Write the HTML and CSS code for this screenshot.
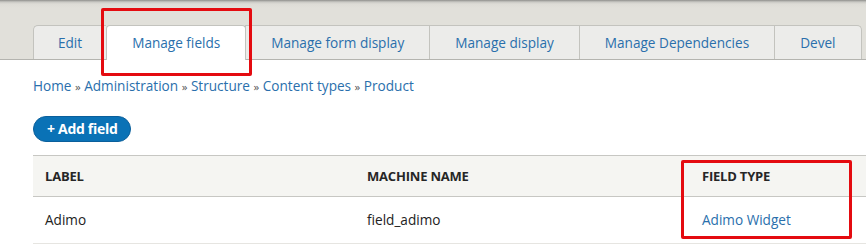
FILE: index.html
```html
<!DOCTYPE html>
<html>
<head>
<meta charset="utf-8">
<link rel="stylesheet" href="styles.css">
</head>
<body>
<header class="tabs-bar">
  <nav class="tabs">
    <a class="tab tab-first" href="#">Edit</a>
    <a class="tab tab-active" href="#">Manage fields</a>
    <a class="tab" href="#">Manage form display</a>
    <a class="tab" href="#">Manage display</a>
    <a class="tab" href="#">Manage Dependencies</a>
    <a class="tab tab-last" href="#">Devel</a>
  </nav>
</header>
<main class="content">
  <div class="breadcrumb">
    <a href="#">Home</a> <span class="sep">»</span> <a href="#">Administration</a> <span class="sep">»</span> <a href="#">Structure</a> <span class="sep">»</span> <a href="#">Content types</a> <span class="sep">»</span> <a href="#">Product</a>
  </div>
  <a class="button-add" href="#">+ Add field</a>
  <table class="fields">
    <thead>
      <tr><th class="col-label">Label</th><th class="col-machine">Machine name</th><th class="col-type">Field type</th></tr>
    </thead>
    <tbody>
      <tr><td>Adimo</td><td>field_adimo</td><td><a href="#">Adimo Widget</a></td></tr>
    </tbody>
  </table>
</main>
<div class="highlight highlight-tab"></div>
<div class="highlight highlight-type"></div>
</body>
</html>
```

FILE: styles.css
```css
html, body {
  margin: 0;
  padding: 0;
  background: #fff;
  overflow: hidden;
}
body {
  font-family: "Open Sans", "DejaVu Sans", sans-serif;
  font-size: 13.6px;
  color: #222;
  position: relative;
  width: 866px;
  height: 244px;
}
a {
  color: #2a6fac;
  text-decoration: none;
}
.tabs-bar {
  height: 34px;
  padding-top: 25px;
  padding-left: 33px;
  background: linear-gradient(#8f8f8c 0, #c9c9c4 2px, #dddcd6 4px, #e1e0da 8px);
  border-bottom: 1px solid #b4b4af;
}
.tabs {
  display: flex;
  height: 34px;
}
.tab {
  display: flex;
  align-items: center;
  justify-content: center;
  box-sizing: border-box;
  height: 34px;
  padding: 0 25px 1px;
  background: #ececea;
  border-top: 1px solid #c3c3be;
  border-left: 1px solid #c3c3be;
  white-space: nowrap;
}
.tab-first {
  border-top-left-radius: 5px;
  padding: 0 24px 1px;
}
.tab-last {
  border-right: 1px solid #c3c3be;
  border-top-right-radius: 5px;
}
.tab-active {
  background: #fff;
  height: 35px;
  padding-bottom: 2px;
  position: relative;
  z-index: 1;
  border-top-left-radius: 4px;
  border-top-right-radius: 4px;
  border-right: 1px solid #c3c3be;
  margin-right: -1px;
}
.content {
  padding-left: 33px;
}
.breadcrumb {
  margin-top: 17px;
  line-height: 18px;
  height: 18px;
}
.breadcrumb .sep {
  color: #555;
  font-size: 11.5px;
}
.button-add {
  display: inline-flex;
  align-items: center;
  margin-top: 21px;
  height: 26px;
  box-sizing: border-box;
  padding: 0 13px 1px 13px;
  border-radius: 13px;
  background: #0a72b6;
  border: 1px solid #0a5f9b;
  color: #fff;
  font-weight: bold;
  font-size: 14px;
  letter-spacing: -0.3px;
}
.fields {
  margin-top: 13px;
  width: 833px;
  border-collapse: collapse;
}
.fields th {
  text-align: left;
  text-transform: uppercase;
  font-size: 13px;
  font-weight: bold;
  color: #262626;
  background: #f5f5f2;
  height: 40px;
  padding: 0 12px;
  border-top: 1px solid #c7c7c3;
  border-bottom: 1px solid #c7c7c3;
  letter-spacing: -0.2px;
}
.fields td {
  height: 45px;
  padding: 0 12px 1px;
  border-bottom: 1px solid #e6e5e1;
}
.col-label { width: 298px; }
.col-machine { width: 311px; }
.highlight {
  position: absolute;
  border: 3px solid #e40b10;
  box-sizing: border-box;
  border-radius: 2px;
  pointer-events: none;
}
.highlight-tab {
  left: 101px;
  top: 8px;
  width: 151px;
  height: 68px;
}
.highlight-type {
  left: 681px;
  top: 160px;
  width: 171px;
  height: 79px;
}
```
